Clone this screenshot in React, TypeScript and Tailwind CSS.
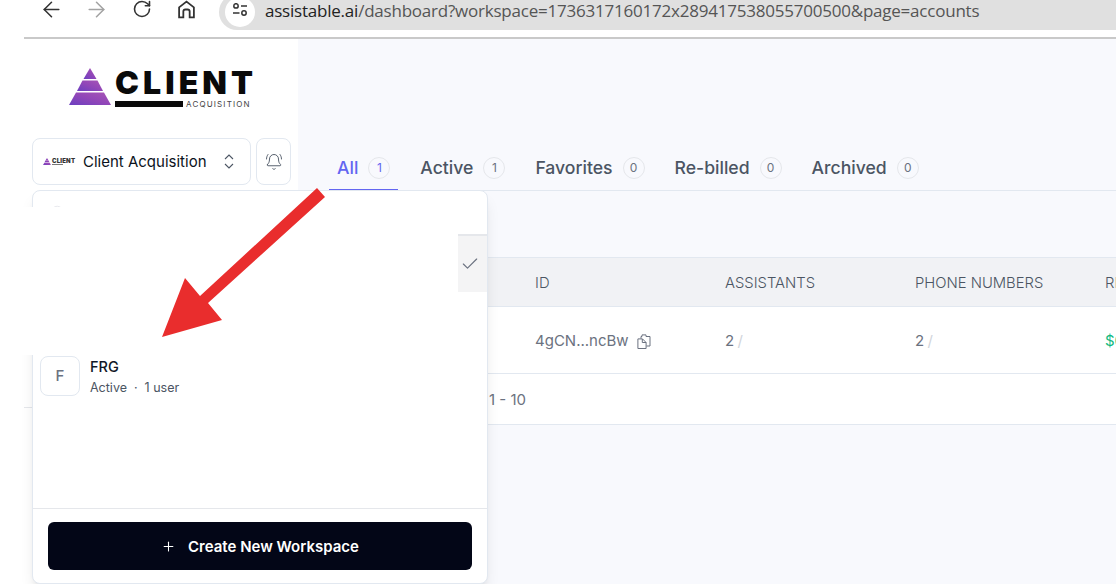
import { ArrowLeft, ArrowRight, BellRing, Check, Plus, RotateCw, Search } from "lucide-react";

const tabs = [
  { label: "All", count: 1, active: true },
  { label: "Active", count: 1 },
  { label: "Favorites", count: 0 },
  { label: "Re-billed", count: 0 },
  { label: "Archived", count: 0 },
];

function Pyramid({ className }: { className: string }) {
  return (
    <svg viewBox="0 0 42 37" className={className}>
      <defs>
        <linearGradient id="pyr" x1="0" y1="1" x2="1" y2="0">
          <stop offset="0" stopColor="#6b3fc0" />
          <stop offset="0.5" stopColor="#9146b8" />
          <stop offset="1" stopColor="#a855b5" />
        </linearGradient>
      </defs>
      <polygon points="21,0 27.5,11 14.5,11" fill="url(#pyr)" />
      <polygon points="13.5,12.5 28.5,12.5 34,23 8,23" fill="url(#pyr)" />
      <polygon points="7,24.5 35,24.5 42,37 0,37" fill="url(#pyr)" />
    </svg>
  );
}

function CopyIcon() {
  return (
    <svg viewBox="0 0 14 15" className="h-[15px] w-[14px]" fill="none" stroke="#6b7280" strokeWidth="1">
      <path d="M5 2.500V.9h4v1.600M9 2.500h4V12h-3.500M5 2.500H4v2" />
      <path d="M.9 4.900h4.600l3.600 3.600v6H.9z" />
      <path d="M5.300 5v3.500h3.800" />
    </svg>
  );
}

export default function App() {
  return (
    <div className="relative flex h-[584px] w-[1116px] flex-col overflow-hidden bg-white [font-family:Inter,sans-serif]">
      {/* Browser bar */}
      <div className="flex h-[37px] shrink-0 items-start bg-white pl-[29px]">
        <div className="flex h-[18px] w-[190px] items-center">
          <div className="flex w-[45px] justify-center">
            <ArrowLeft size={25} strokeWidth={1.5} className="text-[#333]" />
          </div>
          <div className="flex w-[45px] justify-center">
            <ArrowRight size={25} strokeWidth={1.5} className="text-[#a3a3a3]" />
          </div>
          <div className="flex w-[45px] justify-center">
            <RotateCw size={20} strokeWidth={1.9} className="text-[#333]" />
          </div>
          <div className="flex w-[45px] justify-center">
            <svg viewBox="0 0 18 18" className="h-[19px] w-[19px]" fill="none" stroke="#333" strokeWidth="1.7">
              <path d="M2 16.500V7l7-5.500L16 7v9.500h-4V11a2 2 0 0 0-2-2H8a2 2 0 0 0-2 2v5.500z" />
            </svg>
          </div>
        </div>
        <div className="-mt-[6px] flex h-[36px] flex-1 items-center rounded-l-[18px] bg-[#e0e0e0] pl-[6px]">
          <div className="flex h-[30px] w-[30px] items-center justify-center rounded-full bg-white">
            <svg viewBox="0 0 14 13" className="mb-[6px] h-[13px] w-[14px]" fill="none" stroke="#333" strokeWidth="1.500">
              <circle cx="3" cy="2.900" r="2.200" />
              <path d="M8 3h6M0 10h6.500" />
              <circle cx="11" cy="10" r="2.200" />
            </svg>
          </div>
          <span className="mb-[2px] ml-[10px] whitespace-nowrap text-[17px] tracking-[-0.22px] text-[#555] [font-family:'Open_Sans',sans-serif]">
            <span className="text-[#222]">assistable.ai</span>/dashboard?workspace=1736317160172x289417538055700500&amp;page=accounts
          </span>
        </div>
      </div>

      <div className="ml-[24px] flex flex-1 border-t-2 border-[#c9c9c9]">
        {/* Sidebar */}
        <aside className="h-[369px] w-[274px] shrink-0 border-b border-[#e5e7eb] bg-white pl-[8px]">
          <div className="ml-[37px] mt-[29px] flex h-[39px] items-start gap-[4px]">
            <Pyramid className="h-[37px] w-[42px]" />
            <div className="flex flex-col">
              <span className="h-[33px] text-[32px] font-black leading-[30px] tracking-[4.100px] text-[#0a0a0a]">CLIENT</span>
              <div className="flex h-[6px] items-center gap-[3px]">
                <div className="h-[6px] w-[68px] bg-[#0a0a0a]" />
                <span className="text-[8px] leading-[6px] tracking-[1.150px] text-[#444]">ACQUISITION</span>
              </div>
            </div>
          </div>
          <div className="mt-[31px] flex gap-[5px]">
            <div className="flex h-[47px] w-[219px] items-center rounded-lg border border-[#e2e8f0] pl-[10px]">
              <Pyramid className="h-[7px] w-[8px]" />
              <div className="ml-[1px] flex w-[31px] flex-col">
                <span className="text-[6px] font-black leading-[6px] tracking-[0.200px] text-[#333]">CLIENT</span>
                <div className="h-[1px] w-[11px] bg-[#777]" />
              </div>
              <span className="pt-[2px] text-[15px] text-[#0b1220]">Client Acquisition</span>
              <svg viewBox="0 0 10 15" className="ml-[17px] h-[15px] w-[10px]" fill="none" stroke="#4b5563" strokeWidth="1.100">
                <path d="M1 5l4-4 4 4M1 10l4 4 4-4" />
              </svg>
            </div>
            <div className="flex h-[47px] w-[35px] items-center justify-center rounded-lg border border-[#e2e8f0]">
              <BellRing size={18} strokeWidth={1.1} className="text-[#374151]" />
            </div>
          </div>
        </aside>

        {/* Main */}
        <main className="flex-1 bg-[#f8f9fd]">
          <div className="flex h-[152px] items-end gap-[14px] border-b border-[#e2e8f0] pl-[31px]">
            {tabs.map((t) => (
              <div
                key={t.label}
                className={`-mb-px flex h-[40px] items-center gap-[10px] border-b-2 px-[8px] pb-[4px] ${t.active ? "border-[#6366f1]" : "border-transparent"}`}
              >
                <span className={`text-[17.600px] font-medium ${t.active ? "text-[#6366f1]" : "text-[#4b5563]"}`}>{t.label}</span>
                <span className={`flex h-[22px] w-[22px] items-center justify-center rounded-full border border-[#e5e7eb] text-[12px] ${t.active ? "text-[#6366f1]" : "text-[#6b7280]"}`}>
                  {t.count}
                </span>
              </div>
            ))}
          </div>
          <div className="mt-[66px] flex h-[50px] items-center whitespace-nowrap border-y border-[#e2e8f0] bg-[#f1f2f5] pt-[2px] text-[14.800px] font-light text-[#4b5563]">
            <div className="w-[237px]" />
            <div className="w-[190px]">ID</div>
            <div className="w-[190px]">ASSISTANTS</div>
            <div className="w-[190px]">PHONE NUMBERS</div>
            <div>RE</div>
          </div>
          <div className="flex h-[67px] items-center whitespace-nowrap border-b border-[#e2e8f0] bg-white pt-[2px] text-[15px] text-[#6b7280]">
            <div className="w-[237px]" />
            <div className="flex w-[190px] items-center gap-[8px]">
              4gCN...ncBw <CopyIcon />
            </div>
            <div className="w-[190px]">
              2 <span className="-ml-[1px] text-[#d1d5db]">/</span>
            </div>
            <div className="w-[190px]">
              2 <span className="-ml-[1px] text-[#d1d5db]">/</span>
            </div>
            <div className="text-[#10b981]">$0</div>
          </div>
          <div className="flex h-[51px] items-center border-b border-[#e2e8f0] bg-white pl-[191px] pt-[2px] text-[15px] text-[#6b7280]">1 - 10</div>
        </main>
      </div>

      {/* Workspace popover */}
      <div className="absolute left-[32px] top-[190px] flex h-[394px] w-[456px] flex-col rounded-lg border border-[#e2e8f0] bg-white shadow-lg">
        <div className="flex h-[44px] items-center gap-[12px] border-b border-[#e5e7eb] pl-[16px] text-[14px] text-[#e5e7eb]">
          <Search size={18} strokeWidth={1.2} />
          Search workspaces
        </div>
        <div className="flex h-[57px] justify-end">
          <div className="flex w-[30px] items-center justify-center border-t border-[#e5e7eb] bg-[#f4f4f5] pr-[4px]">
            <Check size={20} strokeWidth={1.4} className="text-[#6b7280]" />
          </div>
        </div>
        <div className="flex flex-1 items-start gap-[10px] pl-[7px] pt-[64px]">
          <div className="flex h-[40px] w-[40px] items-center justify-center rounded-lg border border-[#e2e8f0] text-[15px] font-medium text-[#6b7280]">F</div>
          <div className="flex flex-col pt-[1px]">
            <span className="text-[14.500px] font-medium leading-[20px] text-[#111827]">FRG</span>
            <span className="mt-[1px] text-[12.500px] leading-[20px] text-[#4b5563]">Active&nbsp; ·&nbsp; 1 user</span>
          </div>
        </div>
        <div className="border-t border-[#e5e7eb] px-[15px] pb-[13px] pt-[13px]">
          <button className="flex h-[48px] w-full items-center justify-center gap-[12px] rounded-md bg-[#030617] text-[15px] font-semibold text-white">
            <Plus size={15} strokeWidth={1.7} />
            <span className="pt-[2px]">Create New Workspace</span>
          </button>
        </div>
      </div>

      {/* Annotation: white cover over the list */}
      <div className="absolute left-[3px] top-[207px] h-[148px] w-[455px] bg-white" />

      {/* Annotation: red arrow */}
      <svg className="absolute left-0 top-0" width="1116" height="584" viewBox="0 0 1116 584">
        <polygon points="317,188 325,197 208,303 222,320 162,337 185,278 200,296" fill="#e92d2d" />
      </svg>
    </div>
  );
}
